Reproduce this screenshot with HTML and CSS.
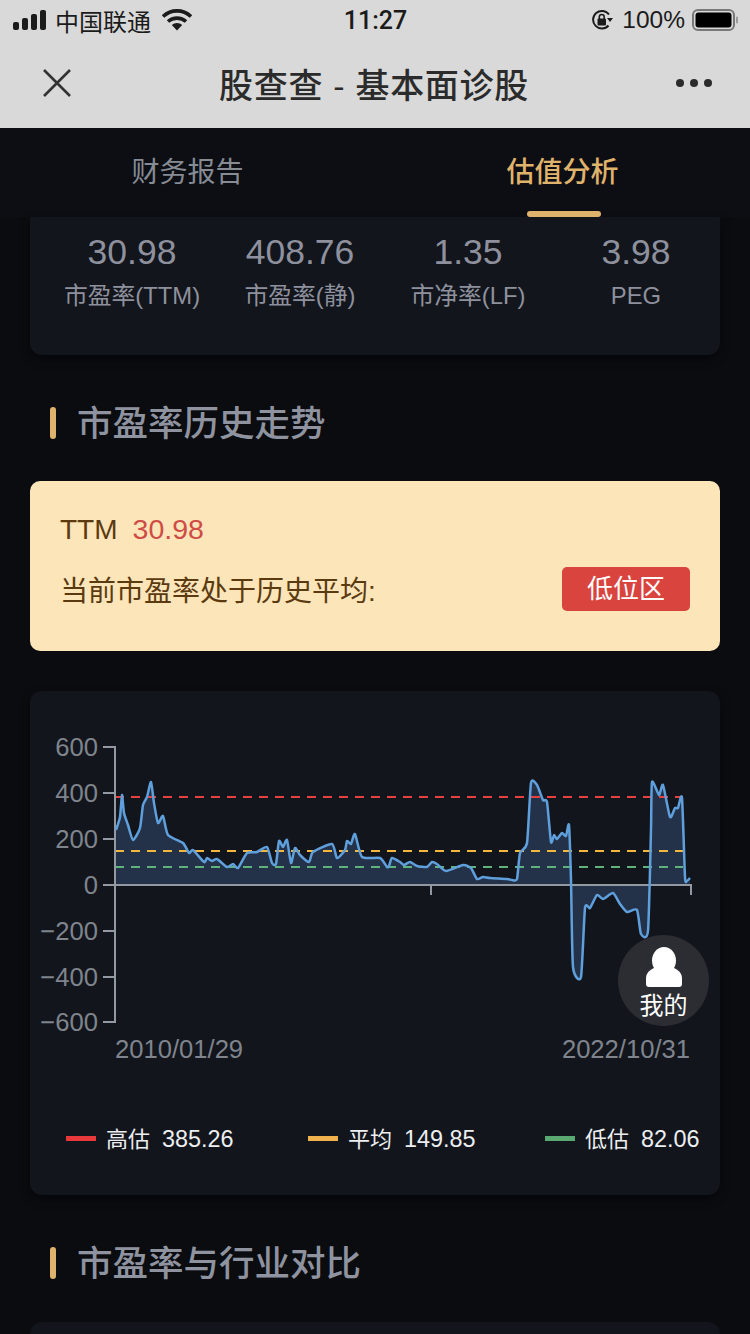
FILE: index.html
```html
<!DOCTYPE html>
<html lang="zh-CN">
<head>
    <meta charset="UTF-8">
    <title>股查查 - 基本面诊股</title>
    <link rel="stylesheet" href="styles.css">
</head>
<body>
    <div class="status-bar">
        <div class="status-left">
            <svg class="signal" width="34" height="20" viewBox="0 0 34 20">
                <rect x="0" y="12" width="6" height="8" rx="2"/>
                <rect x="9" y="8" width="6" height="12" rx="2"/>
                <rect x="18" y="4" width="6" height="16" rx="2"/>
                <rect x="27" y="0" width="6" height="20" rx="2"/>
            </svg>
            <span>中国联通</span>
            <svg class="wifi" width="30" height="22" viewBox="0 0 30 22">
                <path d="M1 7.500 C9 0 21 0 29 7.500" />
                <path d="M6 12.500 C11 8 19 8 24 12.500" />
                <path class="wifi-dot" d="M15 21.500 L9.800 16 C12.500 13.300 17.500 13.300 20.200 16 Z"/>
            </svg>
        </div>
        <div class="status-time">11:27</div>
        <div class="status-right">
            <svg width="21" height="22" viewBox="0 0 21 22">
                <path class="lock-ring" d="M16.500 16.500 A8.800 8.800 0 1 1 17 5.500"/>
                <path class="lock-body" d="M15 9 L21 9 L18 13 Z"/>
                <rect class="lock-body" x="5.500" y="9.500" width="8.500" height="7" rx="1"/>
                <path class="lock-ring thin" d="M7.300 10 V8 A2.400 2.400 0 0 1 12.200 8 V10"/>
            </svg>
            <span>100%</span>
            <svg width="46" height="22" viewBox="0 0 46 22">
                <rect class="batt-line" x="1" y="1" width="41" height="20" rx="5"/>
                <rect x="3.500" y="3.500" width="36" height="15" rx="3"/>
                <rect class="batt-cap" x="44" y="7.500" width="2" height="7" rx="1"/>
            </svg>
        </div>
    </div>

    <div class="nav-bar">
        <svg class="nav-close" width="30" height="30" viewBox="0 0 30 30">
            <path d="M2 2 L28 28 M28 2 L2 28"/>
        </svg>
        <div class="nav-title">股查查 - 基本面诊股</div>
        <div class="nav-more"><i></i><i></i><i></i></div>
    </div>

    <div class="tabs">
        <div class="tab">财务报告</div>
        <div class="tab active">估值分析</div>
    </div>

    <div class="content">
        <div class="card stats">
            <div class="stat"><b>30.98</b><span>市盈率(TTM)</span></div>
            <div class="stat"><b>408.76</b><span>市盈率(静)</span></div>
            <div class="stat"><b>1.35</b><span>市净率(LF)</span></div>
            <div class="stat"><b>3.98</b><span>PEG</span></div>
        </div>

        <h2 class="section-title">市盈率历史走势</h2>

        <div class="notice">
            <div class="notice-top">TTM<span class="notice-num">30.98</span></div>
            <div class="notice-row">
                <span>当前市盈率处于历史平均:</span>
                <span class="notice-tag">低位区</span>
            </div>
        </div>

        <div class="card chart-card">
            <svg class="chart" width="690" height="345" viewBox="30 725 690 345">
                <path id="area" class="chart-area"/>
                <path class="avg-line red" d="M115 797 H683"/>
                <path class="avg-line yellow" d="M115 851 H683"/>
                <path class="avg-line green" d="M115 867 H683"/>
                <path class="axis" d="M103 747 H115 V1022 H103 M103 793 H115 M103 839 H115 M103 885 H691 V895 M103 931 H115 M103 977 H115 M431 885 V895"/>
                <path id="line" class="chart-line"/>
                <g class="y-labels">
                    <text x="98" y="756">600</text>
                    <text x="98" y="802">400</text>
                    <text x="98" y="848">200</text>
                    <text x="98" y="894">0</text>
                    <text x="98" y="940">−200</text>
                    <text x="98" y="986">−400</text>
                    <text x="98" y="1031">−600</text>
                </g>
                <text class="x-label" x="115" y="1058">2010/01/29</text>
                <text class="x-label end" x="690" y="1058">2022/10/31</text>
            </svg>
            <div class="legend">
                <div class="legend-item"><i class="red"></i>高估<span>385.26</span></div>
                <div class="legend-item"><i class="yellow"></i>平均<span>149.85</span></div>
                <div class="legend-item"><i class="green"></i>低估<span>82.06</span></div>
            </div>
        </div>

        <h2 class="section-title next">市盈率与行业对比</h2>

        <div class="card last"></div>
    </div>

    <div class="my-btn">
        <svg width="36" height="40" viewBox="0 0 36 40">
            <ellipse cx="18" cy="13.500" rx="12" ry="13.500"/>
            <path d="M0 37 V31 C0 24 8 19 18 19 C28 19 36 24 36 31 V37 Q36 40 33 40 H3 Q0 40 0 37 Z"/>
        </svg>
        <span>我的</span>
    </div>

    <script>
        const pts = [[116,830],[120,817],[122,795],[124,813],[128,825],[133,840],[140,828],[143,805],[147,797],[151,782],[154,803],[158,823],[163,816],[168,835],[183,843],[189,853],[193,850],[204,862],[207,858],[212,861],[217,859],[227,867],[233,864],[238,868],[247,853],[257,852],[267,847],[272,863],[276,864],[279,841],[283,847],[287,840],[291,863],[295,848],[300,855],[309,862],[313,852],[332,844],[337,858],[345,850],[347,841],[351,844],[355,834],[362,857],[380,858],[387,867],[389,866],[392,858],[400,862],[404,865],[410,862],[417,866],[427,867],[432,862],[437,864],[446,871],[463,865],[471,868],[477,879],[483,877],[490,878],[507,879],[512,880],[517,879],[520,853],[527,843],[531,783],[537,785],[543,800],[547,802],[551,842],[554,835],[557,839],[562,833],[566,836],[569,825],[571,880],[573,967],[581,977],[585,908],[590,908],[597,895],[603,899],[613,893],[620,904],[627,912],[637,910],[641,934],[648,931],[651,830],[652,782],[659,795],[663,785],[670,817],[675,808],[678,808],[682,798],[685,877],[687,881],[690,878]];

        // catmull-rom through the points
        let d = 'M' + pts[0].join(' ');
        for (let i = 0; i < pts.length - 1; i++) {
            const p0 = pts[Math.max(i - 1, 0)], p1 = pts[i], p2 = pts[i + 1], p3 = pts[Math.min(i + 2, pts.length - 1)];
            const c1 = [p1[0] + (p2[0] - p0[0]) / 10, p1[1] + (p2[1] - p0[1]) / 10];
            const c2 = [p2[0] - (p3[0] - p1[0]) / 10, p2[1] - (p3[1] - p1[1]) / 10];
            d += ' C' + c1.join(' ') + ' ' + c2.join(' ') + ' ' + p2.join(' ');
        }
        document.getElementById('line').setAttribute('d', d);
        document.getElementById('area').setAttribute('d', d + ' L690 885 L116 885 Z');
    </script>
</body>
</html>
```

FILE: styles.css
```css
* {
    box-sizing: border-box;
}
html, body {
    margin: 0;
    padding: 0;
}
body {
    position: relative;
    width: 750px;
    height: 1334px;
    overflow: hidden;
    background-color: #0a0c10;
    font-family: 'Liberation Sans', 'Noto Sans CJK SC', sans-serif;
}
.status-bar {
    height: 40px;
    padding: 0 12px 0 13px;
    background-color: #d9d9d9;
    color: #1b1b1b;
    font-size: 24px;
    display: grid;
    grid-template-columns: 1fr auto 1fr;
    align-items: center;
}
.status-left {
    display: flex;
    align-items: center;
}
.status-left span {
    margin-left: 8px;
}
.signal {
    fill: #1b1b1b;
}
.wifi {
    margin-left: 11px;
    fill: none;
    stroke: #1b1b1b;
    stroke-width: 3.6;
}
.wifi .wifi-dot {
    fill: #1b1b1b;
    stroke: none;
}
.status-time {
    font-family: Roboto, 'Liberation Sans', sans-serif;
    font-weight: 500;
    font-size: 25px;
}
.status-right {
    display: flex;
    align-items: center;
    justify-content: flex-end;
    gap: 9px;
}
.status-right span {
    font-size: 24.500px;
    margin-right: -2px;
}
.lock-ring {
    fill: none;
    stroke: #1b1b1b;
    stroke-width: 2;
}
.lock-ring.thin {
    stroke-width: 1.6;
}
.lock-body {
    fill: #1b1b1b;
}
.batt-line {
    fill: none;
    stroke: #77787a;
    stroke-width: 2;
}
.batt-cap {
    fill: #9a9a9c;
}
.nav-bar {
    height: 88px;
    padding: 0 38px 2px 42px;
    background-color: #d9d9d9;
    display: flex;
    align-items: center;
    justify-content: space-between;
}
.nav-close {
    fill: none;
    stroke: #333;
    stroke-width: 2.6;
}
.nav-title {
    font-size: 34px;
    font-weight: 500;
    color: #2b2b2b;
    letter-spacing: 0.7px;
}
.nav-more {
    display: flex;
    gap: 6px;
}
.nav-more i {
    width: 8px;
    height: 8px;
    border-radius: 50%;
    background-color: #2b2b2b;
}
.tabs {
    height: 89px;
    display: flex;
    background-color: #0c0e13;
}
.tab {
    flex: 1;
    position: relative;
    text-align: center;
    padding-top: 24px;
    font-size: 28px;
    line-height: 42px;
    color: #868b94;
}
.tab.active {
    color: #e0b36c;
    font-weight: 500;
}
.tab.active::after {
    content: '';
    position: absolute;
    left: 152px;
    bottom: 0;
    width: 74px;
    height: 6px;
    border-radius: 3px;
    background-color: #e0b36c;
}
.content {
    padding: 0 30px;
}
.card {
    background-color: #12151c;
    border-radius: 0 0 12px 12px;
}
.stats {
    height: 138px;
    padding: 12px 0 0 18px;
    display: grid;
    grid-template-columns: repeat(4, 168px);
    box-shadow: 0 4px 10px rgba(0, 0, 0, 0.5);
}
.stat {
    text-align: center;
    color: #8e919d;
}
.stat b {
    display: block;
    font-weight: 400;
    font-size: 35.500px;
    line-height: 46px;
}
.stat span {
    display: block;
    font-size: 23.800px;
    line-height: 42px;
    white-space: nowrap;
}
.section-title {
    margin: 51px 0 39px 20px;
    padding-left: 27px;
    height: 36px;
    line-height: 36px;
    font-size: 35.500px;
    font-weight: 500;
    color: #8f93a0;
    position: relative;
}
.section-title::before {
    content: '';
    position: absolute;
    left: 0;
    top: 1px;
    width: 6px;
    height: 32px;
    border-radius: 3px;
    background-color: #e0b36c;
}
.section-title.next {
    margin: 51px 0 40px 20px;
}
.notice {
    height: 170px;
    padding: 30px 30px 0;
    border-radius: 10px;
    background-color: #fbe5b9;
    color: #5c3a10;
}
.notice-top {
    font-size: 28px;
    line-height: 36px;
}
.notice-num {
    margin-left: 15px;
    font-size: 28.500px;
    color: #cf4c46;
}
.notice-row {
    margin-top: 19px;
    display: flex;
    align-items: center;
    justify-content: space-between;
    font-size: 28px;
}
.notice-tag {
    width: 128px;
    height: 44px;
    line-height: 44px;
    text-align: center;
    border-radius: 5px;
    background-color: #d9443f;
    font-size: 26px;
    color: #fff;
}
.chart-card {
    margin-top: 40px;
    height: 504px;
    padding-top: 34px;
    border-radius: 12px;
    box-shadow: 0 4px 10px rgba(0, 0, 0, 0.5);
}
.chart {
    display: block;
}
.chart-area {
    fill: #233249;
}
.chart-line {
    fill: none;
    stroke: #5f9fdc;
    stroke-width: 2.500;
    stroke-linejoin: round;
}
.avg-line {
    fill: none;
    stroke-width: 2;
    stroke-dasharray: 9 7;
}
.avg-line.red {
    stroke: #e8423f;
}
.avg-line.yellow {
    stroke: #f3b73f;
}
.avg-line.green {
    stroke: #5fb47c;
}
.axis {
    fill: none;
    stroke: #9399a3;
    stroke-width: 2;
}
.y-labels text {
    text-anchor: end;
}
.chart text {
    font-size: 25.600px;
    fill: #7f848d;
}
.chart .x-label.end {
    text-anchor: end;
}
.legend {
    margin-top: 54px;
    padding-left: 36px;
    display: flex;
    font-size: 22px;
    line-height: 30px;
    color: #eceef0;
}
.legend-item {
    white-space: nowrap;
}
.legend-item:nth-child(1) {
    width: 242px;
}
.legend-item:nth-child(2) {
    width: 237px;
}
.legend-item i {
    display: inline-block;
    width: 30px;
    height: 5px;
    margin-right: 10px;
    vertical-align: 6px;
}
.legend-item span {
    margin-left: 12px;
    font-size: 23.400px;
}
.legend-item i.red {
    background-color: #e8383a;
}
.legend-item i.yellow {
    background-color: #f0b24c;
}
.legend-item i.green {
    background-color: #5aa872;
}
.card.last {
    height: 40px;
    border-radius: 12px 12px 0 0;
}
.my-btn {
    position: absolute;
    left: 618px;
    top: 935px;
    width: 91px;
    height: 91px;
    border-radius: 50%;
    background-color: #2b2d33;
    color: #fff;
    font-size: 24px;
    line-height: 30px;
    display: flex;
    flex-direction: column;
    align-items: center;
    padding-top: 12px;
}
.my-btn svg {
    fill: #fff;
    display: block;
    margin-left: 1px;
    margin-bottom: 4px;
}
```
